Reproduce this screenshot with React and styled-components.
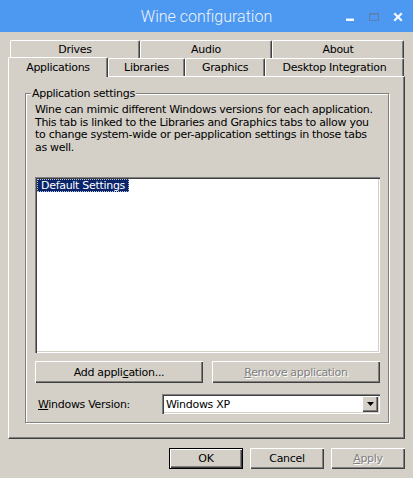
import React from 'react';
import styled, { createGlobalStyle, css } from 'styled-components';

const FACE = '#d4d0c8';

const GlobalStyle = createGlobalStyle`
  html, body { margin: 0; padding: 0; background: ${FACE}; }
  body { font-family: "DejaVu Sans", "Liberation Sans", sans-serif; }
  * { box-sizing: border-box; }
`;

const uiFont = css`
  font-family: "DejaVu Sans", "Liberation Sans", sans-serif;
  font-size: 11px;
  letter-spacing: -0.3px;
  color: #000;
`;

const raised = css`
  box-shadow: inset 1px 1px 0 #fff, inset -1px -1px 0 #404040, inset -2px -2px 0 #808080;
`;

const sunken = css`
  box-shadow: inset 1px 1px 0 #808080, inset 2px 2px 0 #404040, inset -1px -1px 0 #fff, inset -2px -2px 0 ${FACE};
`;

const Window = styled.div`
  width: 413px;
  height: 478px;
  display: flex;
  flex-direction: column;
  background: ${FACE};
  overflow: hidden;
`;

const TitleBar = styled.div`
  height: 32px;
  flex: none;
  background: #4d98f0;
  display: grid;
  grid-template-columns: 1fr auto 1fr;
  align-items: center;
`;

const Title = styled.div`
  grid-column: 2;
  font-family: Roboto, "Liberation Sans", sans-serif;
  font-weight: 300;
  font-size: 16px;
  color: #eef4fd;
  white-space: nowrap;
`;

const Controls = styled.div`
  grid-column: 3;
  justify-self: end;
  display: flex;
  align-items: center;
  gap: 14px;
  margin-right: 10px;
`;

const Body = styled.div`
  flex: 1;
  padding: 8px 8px 0 8px;
  display: flex;
  flex-direction: column;
`;

const TabStrip = styled.div`
  display: flex;
  flex-direction: column;
`;

const TabRow = styled.div`
  display: flex;
  align-items: flex-end;
  height: 18px;
  margin-left: ${p => p.$indent || 0}px;
`;

const Tab = styled.div`
  ${uiFont};
  width: ${p => p.$w}px;
  height: ${p => (p.$active ? 20 : 18)}px;
  margin-bottom: ${p => (p.$active ? -1 : 0)}px;
  position: ${p => (p.$active ? 'relative' : 'static')};
  z-index: ${p => (p.$active ? 2 : 'auto')};
  background: ${FACE};
  border-top: 1px solid #fff;
  border-left: 1px solid #fff;
  border-right: 1px solid #404040;
  border-radius: 2px 2px 0 0;
  box-shadow: inset -1px 0 0 #808080;
  display: flex;
  align-items: center;
  justify-content: center;
  white-space: nowrap;
`;

const Panel = styled.div`
  height: 363px;
  flex: none;
  display: flex;
  border-top: 1px solid #fff;
  border-left: 1px solid #fff;
  border-right: 1px solid #404040;
  border-bottom: 1px solid #404040;
  box-shadow: inset -1px -1px 0 #808080;
  padding: 16px 15px 15px 16px;
`;

const GroupBox = styled.div`
  flex: 1;
  position: relative;
  border: 1px solid #808080;
  box-shadow: inset 1px 1px 0 #fff, 1px 1px 0 #fff;
  padding: 10px 8px 0 9px;
  display: flex;
  flex-direction: column;
`;

const Legend = styled.div`
  ${uiFont};
  position: absolute;
  top: -7px;
  left: 5px;
  line-height: 13px;
  padding: 0 1px;
  background: ${FACE};
`;

const Description = styled.p`
  ${uiFont};
  margin: 0;
  line-height: 12.5px;
  white-space: nowrap;
`;

const ListBox = styled.div`
  margin-top: 23px;
  height: 176px;
  background: #fff;
  ${sunken};
  padding: 2px;
  display: flex;
  flex-direction: column;
  align-items: flex-start;
`;

const ListItem = styled.div`
  ${uiFont};
  background: #0a246a;
  color: #fff;
  height: 13px;
  line-height: 13px;
  padding: 0 4px 0 4px;
  outline: 1px dotted #bfc6d8;
  outline-offset: -1px;
  white-space: nowrap;
`;

const ButtonPair = styled.div`
  margin-top: 8px;
  display: grid;
  grid-template-columns: 1fr 1fr;
  gap: 9px;
`;

const Button = styled.button`
  ${uiFont};
  height: ${p => p.$h || 22}px;
  width: ${p => (p.$w ? `${p.$w}px` : 'auto')};
  background: ${FACE};
  border: ${p => (p.$default ? '1px solid #000' : 'none')};
  padding: 0;
  ${raised};
  &:disabled {
    color: #808080;
    text-shadow: 1px 1px 0 #fff;
  }
  u { text-decoration: underline; }
`;

const VersionRow = styled.div`
  margin-top: 11px;
  height: 20px;
  display: flex;
  align-items: center;
`;

const VersionLabel = styled.div`
  ${uiFont};
  width: 127px;
  padding-left: 3px;
`;

const Combo = styled.div`
  flex: 1;
  height: 20px;
  background: #fff;
  ${sunken};
  padding: 2px;
  display: flex;
  align-items: center;
`;

const ComboText = styled.div`
  ${uiFont};
  flex: 1;
  padding-left: 2px;
`;

const ComboArrow = styled.div`
  width: 16px;
  height: 16px;
  background: ${FACE};
  ${raised};
  display: flex;
  align-items: center;
  justify-content: center;
`;

const Footer = styled.div`
  margin-top: 9px;
  display: flex;
  justify-content: flex-end;
  gap: 7px;
`;

const MinIcon = () => (
  <svg width="10" height="12" viewBox="0 0 10 12">
    <rect x="1" y="8.5" width="8" height="2.5" fill="#f4f8ff" />
  </svg>
);
const MaxIcon = () => (
  <svg width="10" height="12" viewBox="0 0 10 12">
    <rect x="0.5" y="3.5" width="9" height="7" fill="none" stroke="#5f7fae" strokeWidth="1" />
    <rect x="0.5" y="3" width="9" height="1.6" fill="#5f7fae" />
  </svg>
);
const CloseIcon = () => (
  <svg width="10" height="12" viewBox="0 0 10 12">
    <path d="M1.2 3.2 L8.8 10.8 M8.8 3.2 L1.2 10.8" stroke="#f4f8ff" strokeWidth="2.2" strokeLinecap="butt" />
  </svg>
);

const Arrow = () => (
  <svg width="7" height="4" viewBox="0 0 7 4">
    <path d="M0 0 H7 L3.5 4 Z" fill="#000" />
  </svg>
);

export default function App() {
  return (
    <>
      <GlobalStyle />
      <Window>
        <TitleBar>
          <Title>Wine configuration</Title>
          <Controls>
            <MinIcon />
            <MaxIcon />
            <CloseIcon />
          </Controls>
        </TitleBar>
        <Body>
          <TabStrip>
            <TabRow $indent={2}>
              <Tab $w={130}>Drives</Tab>
              <Tab $w={132}>Audio</Tab>
              <Tab $w={132}>About</Tab>
            </TabRow>
            <TabRow>
              <Tab $w={100} $active>Applications</Tab>
              <Tab $w={77}>Libraries</Tab>
              <Tab $w={80}>Graphics</Tab>
              <Tab $w={139}>Desktop Integration</Tab>
            </TabRow>
          </TabStrip>
          <Panel>
            <GroupBox>
              <Legend>Application settings</Legend>
              <Description>
                Wine can mimic different Windows versions for each application.
                <br />
                This tab is linked to the Libraries and Graphics tabs to allow you
                <br />
                to change system-wide or per-application settings in those tabs
                <br />
                as well.
              </Description>
              <ListBox>
                <ListItem>Default Settings</ListItem>
              </ListBox>
              <ButtonPair>
                <Button>Add appli<u>c</u>ation...</Button>
                <Button disabled><u>R</u>emove application</Button>
              </ButtonPair>
              <VersionRow>
                <VersionLabel><u>W</u>indows Version:</VersionLabel>
                <Combo>
                  <ComboText>Windows XP</ComboText>
                  <ComboArrow><Arrow /></ComboArrow>
                </Combo>
              </VersionRow>
            </GroupBox>
          </Panel>
          <Footer>
            <Button $w={74} $h={21} $default>OK</Button>
            <Button $w={74} $h={21}>Cancel</Button>
            <Button $w={74} $h={21} disabled><u>A</u>pply</Button>
          </Footer>
        </Body>
      </Window>
    </>
  );
}
